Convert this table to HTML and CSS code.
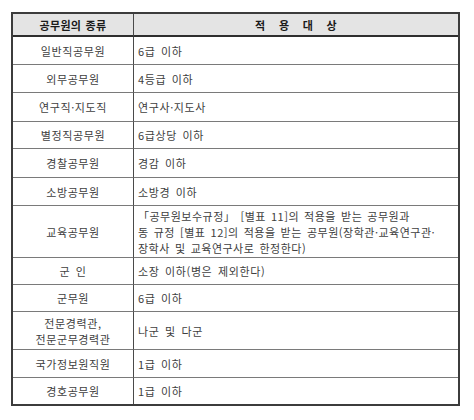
FILE: index.html
```html
<!DOCTYPE html>
<html lang="ko">
<head>
<meta charset="utf-8">
<link rel="stylesheet" href="styles.css">
</head>
<body>
<div class="tbl">
  <div class="c h l">공무원의 종류</div>
  <div class="c h r">적 용 대 상</div>

  <div class="c l">일반직공무원</div><div class="c r">6급 이하</div>
  <div class="c l">외무공무원</div><div class="c r">4등급 이하</div>
  <div class="c l">연구직·지도직</div><div class="c r">연구사·지도사</div>
  <div class="c l">별정직공무원</div><div class="c r">6급상당 이하</div>
  <div class="c l">경찰공무원</div><div class="c r">경감 이하</div>
  <div class="c l">소방공무원</div><div class="c r">소방경 이하</div>
  <div class="c l">교육공무원</div>
  <div class="c r multi">「공무원보수규정」 [별표 11]의 적용을 받는 공무원과<br>동 규정 [별표 12]의 적용을 받는 공무원(장학관·교육연구관·<br>장학사 및 교육연구사로 한정한다)</div>
  <div class="c l">군 인</div><div class="c r">소장 이하(병은 제외한다)</div>
  <div class="c l">군무원</div><div class="c r">6급 이하</div>
  <div class="c l two">전문경력관,<br>전문군무경력관</div><div class="c r">나군 및 다군</div>
  <div class="c l">국가정보원직원</div><div class="c r">1급 이하</div>
  <div class="c l last">경호공무원</div><div class="c r last">1급 이하</div>
</div>
</body>
</html>
```

FILE: styles.css
```css
html, body {
  margin: 0;
  padding: 0;
  background: #ffffff;
}
body {
  padding: 12px 0 0 11px;
  font-family: "Noto Sans CJK KR", "Noto Sans", sans-serif;
  font-size: 11px;
  color: #404040;
}
.tbl {
  box-sizing: border-box;
  width: 449px;
  border: 2px solid #3c3c3c;
  display: grid;
  grid-template-columns: 121px 1fr;
  grid-template-rows: 23px 28px 28px 29px 27px 29px 28px 52px 27px 27px 38px 28px 26px;
}
.c {
  box-sizing: border-box;
  display: flex;
  align-items: center;
  border-bottom: 1px solid #7a7a7a;
  white-space: nowrap;
  letter-spacing: 0.6px;
  word-spacing: 2px;
  line-height: 16px;
}
.l {
  justify-content: center;
  text-align: center;
  border-right: 1px solid #4a4a4a;
}
.r {
  padding-left: 4px;
}
.h {
  background: #e4e4e4;
  border-bottom: 2px solid #2e2e2e;
  color: #1a1a1a;
  font-weight: bold;
  letter-spacing: 0.3px;
  word-spacing: 1px;
}
.h.r {
  justify-content: center;
  padding-left: 0;
  word-spacing: 10px;
}
.multi {
  line-height: 16px;
  word-spacing: 1.5px;
  letter-spacing: 0.5px;
}
.two {
  line-height: 16px;
}
.last {
  border-bottom: none;
}
```
